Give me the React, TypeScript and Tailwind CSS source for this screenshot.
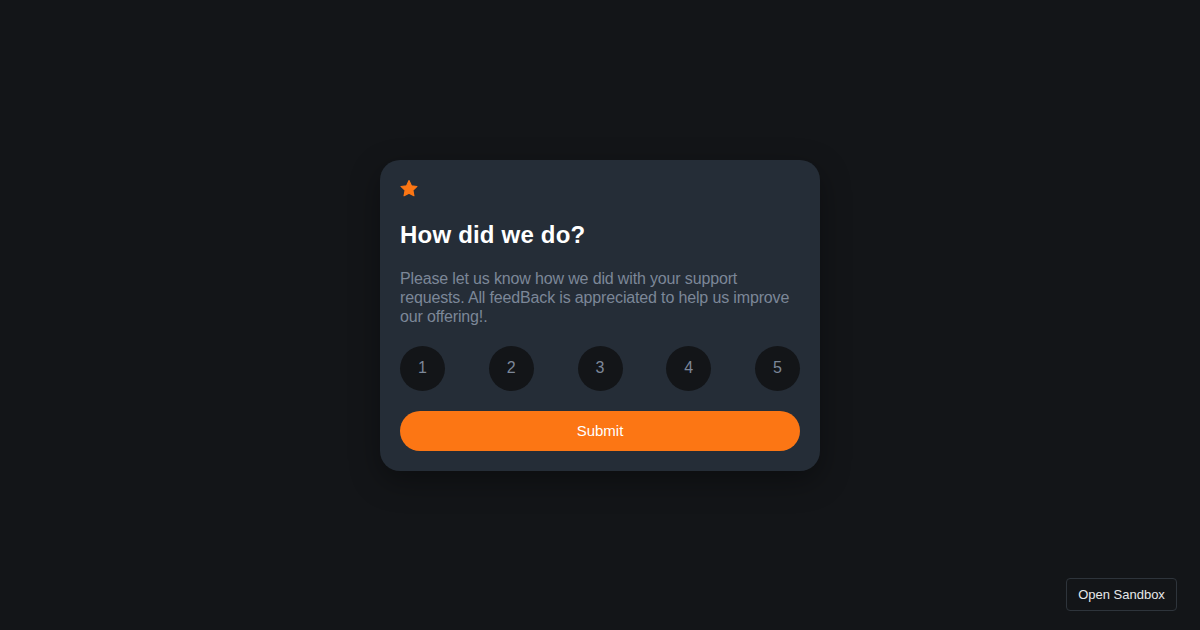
import React from "react";

export default function App() {
  const font = { fontFamily: '"Liberation Sans", Arial, sans-serif' };
  return (
    <div className="w-[1200px] h-[630px] bg-[#131518] relative flex items-center justify-center" style={font}>
      <div className="w-[440px] bg-[#252d37] rounded-[20px] p-5 flex flex-col shadow-[0_10px_30px_rgba(0,0,0,0.35)]">
        <svg width="18" height="17" viewBox="0 0 24 23">
          <path
            d="M12 0.8l3.3 6.9 7.5 1-5.5 5.2 1.4 7.5L12 17.8l-6.7 3.6 1.4-7.5L1.2 8.7l7.5-1z"
            fill="#fc7614"
            stroke="#fc7614"
            strokeWidth="1.5"
            strokeLinejoin="round"
          />
        </svg>
        <h1 className="mt-[24px] text-[24px] leading-[28px] font-bold text-white tracking-[0.2px]">How did we do?</h1>
        <p className="mt-[20px] text-[16px] leading-[19px] text-[#7c8798] tracking-[-0.15px]">
          Please let us know how we did with your support requests. All feedBack is appreciated to help us improve our offering!.
        </p>
        <div className="mt-[20px] flex justify-between">
          {[1, 2, 3, 4, 5].map((n) => (
            <div
              key={n}
              className="w-[45px] h-[45px] rounded-full bg-[#131518] flex items-center justify-center text-[16px] text-[#7c8798]"
            >
              {n}
            </div>
          ))}
        </div>
        <button className="mt-[20px] h-[40px] w-full rounded-full bg-[#fc7614] text-white text-[15px] pt-[1px]">
          Submit
        </button>
      </div>
      <div className="absolute right-[23px] bottom-[19px] w-[111px] h-[33px] border border-[#2e343b] rounded-[4px] bg-[#131518] text-[#e6e8ea] text-[13px] flex items-center justify-center">
        Open Sandbox
      </div>
    </div>
  );
}
